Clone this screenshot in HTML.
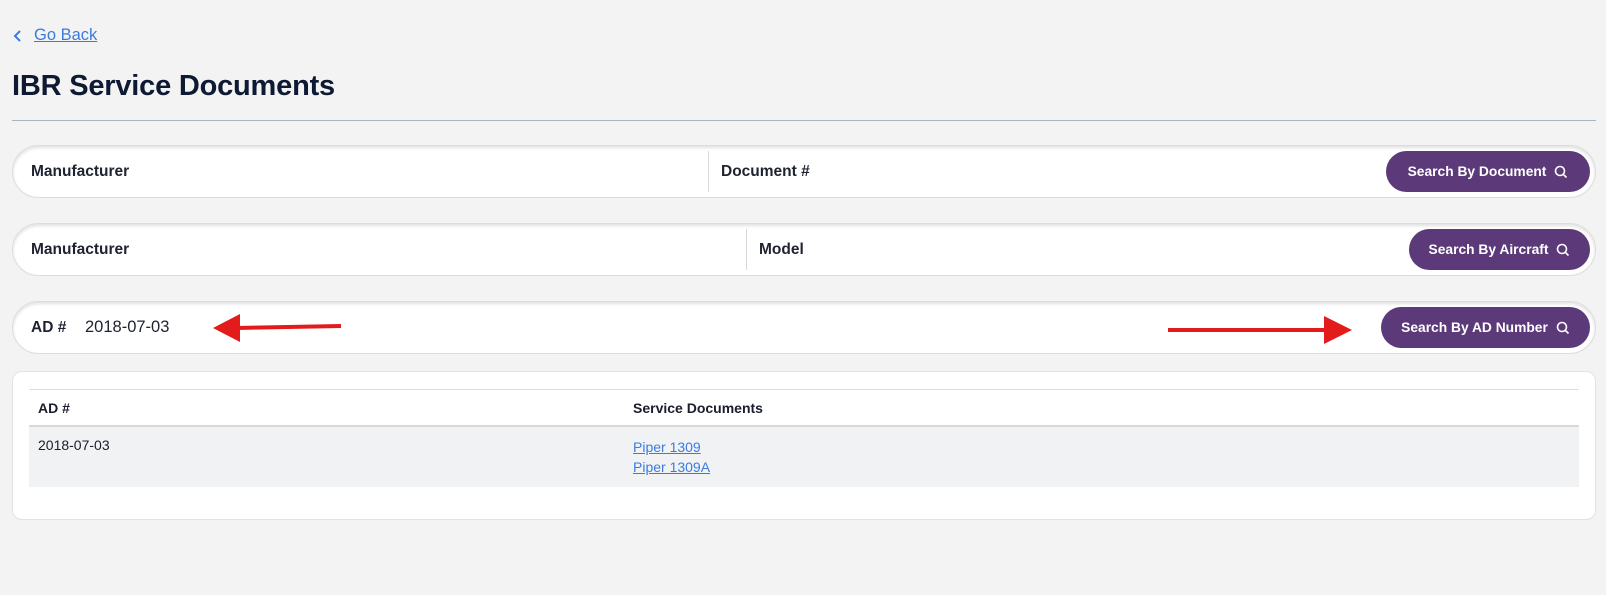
<!DOCTYPE html>
<html><head><meta charset="utf-8"><style>
*{box-sizing:border-box;margin:0;padding:0}
body{width:1606px;height:595px;background:#f3f3f3;font-family:"Liberation Sans",sans-serif;position:relative;overflow:hidden;color:#1a1d2b}
.abs{position:absolute}
.back{left:12px;top:26px;color:#3b7be0;font-size:16.5px;display:flex;align-items:center}
.back a{color:#3b7be0;text-decoration:underline;margin-left:10px}
h1{position:absolute;left:12px;top:70px;font-size:29px;font-weight:bold;color:#0e1a33;letter-spacing:-0.2px}
.hr{left:12px;top:120px;width:1584px;height:1px;background:#a9b3c6}
.bar{position:absolute;left:12px;width:1584px;height:53px;background:#fff;border-radius:27px;border:1px solid #dcdcdc;box-shadow:inset 0 2px 3px rgba(0,0,0,0.12)}
.lbl{position:absolute;top:17px;font-size:15.5px;font-weight:bold;color:#1f2230}
.div{position:absolute;top:5px;width:1px;height:41px;background:#d8d8d8}
.btn{position:absolute;top:5px;right:5px;height:41px;border-radius:21px;background:#5c3a7a;color:#fff;font-size:13.8px;font-weight:bold;display:flex;align-items:center;justify-content:center;gap:8px}
.card{left:12px;top:371px;width:1584px;height:149px;background:#fff;border:1px solid #e2e2e2;border-radius:10px}
.tbl{position:absolute;left:16px;top:17px;width:1550px}
.th{height:38px;border-top:1px solid #dedede;border-bottom:2px solid #d8d8d8;position:relative;font-size:14px;font-weight:bold}
.tr{height:60px;background:#f1f2f4;position:relative;font-size:14px}
.link{color:#3b7be0;text-decoration:underline;display:block;line-height:20px}
</style></head><body>
<div class="abs back"><svg width="12" height="14" viewBox="0 0 12 14"><path d="M8 2 L3 7 L8 12" stroke="#3b7be0" stroke-width="2" fill="none"/></svg><a>Go Back</a></div>
<h1>IBR Service Documents</h1>
<div class="abs hr"></div>

<div class="bar" style="top:145px">
<div class="lbl" style="left:18px">Manufacturer</div>
<div class="div" style="left:695px"></div>
<div class="lbl" style="left:708px">Document #</div>
<div class="btn" style="width:204px">Search By Document <svg width="14" height="14" viewBox="0 0 14 14"><circle cx="6" cy="6" r="4.5" stroke="#fff" stroke-width="1.6" fill="none"/><path d="M9.3 9.3 L12.5 12.5" stroke="#fff" stroke-width="1.6"/></svg></div>
</div>

<div class="bar" style="top:223px">
<div class="lbl" style="left:18px">Manufacturer</div>
<div class="div" style="left:733px"></div>
<div class="lbl" style="left:746px">Model</div>
<div class="btn" style="width:181px">Search By Aircraft <svg width="14" height="14" viewBox="0 0 14 14"><circle cx="6" cy="6" r="4.5" stroke="#fff" stroke-width="1.6" fill="none"/><path d="M9.3 9.3 L12.5 12.5" stroke="#fff" stroke-width="1.6"/></svg></div>
</div>

<div class="bar" style="top:301px">
<div class="lbl" style="left:18px">AD #</div>
<div class="lbl" style="left:72px;font-weight:normal;font-size:16.5px;top:16px">2018-07-03</div>
<div class="btn" style="width:209px">Search By AD Number <svg width="14" height="14" viewBox="0 0 14 14"><circle cx="6" cy="6" r="4.5" stroke="#fff" stroke-width="1.6" fill="none"/><path d="M9.3 9.3 L12.5 12.5" stroke="#fff" stroke-width="1.6"/></svg></div>
</div>

<svg class="abs" style="left:0;top:0" width="1606" height="595">
<path d="M341 326 L236 328" stroke="#e31b1b" stroke-width="4"/>
<path d="M213 328 L240 314 L240 342 Z" fill="#e31b1b"/>
<path d="M1168 330 L1326 330" stroke="#e31b1b" stroke-width="4"/>
<path d="M1352 330 L1324 316 L1324 344 Z" fill="#e31b1b"/>
</svg>

<div class="abs card">
<div class="tbl">
<div class="th"><span class="abs" style="left:9px;top:10px">AD #</span><span class="abs" style="left:604px;top:10px">Service Documents</span></div>
<div class="tr"><span class="abs" style="left:9px;top:10px">2018-07-03</span><span class="abs" style="left:604px;top:10px"><a class="link">Piper 1309</a><a class="link">Piper 1309A</a></span></div>
</div>
</div>
</body></html>
